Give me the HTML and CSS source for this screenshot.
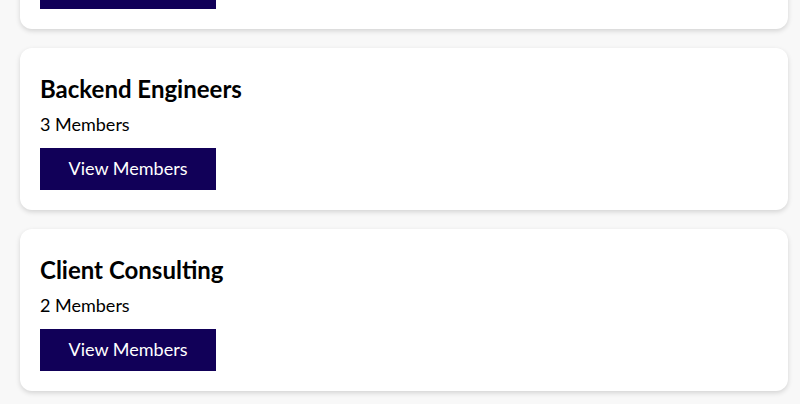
FILE: index.html
```html
<!DOCTYPE html>
<html lang="en">
<head>
<meta charset="utf-8">
<title>Teams</title>
<link rel="stylesheet" href="styles.css">
</head>
<body>
<main class="team-list">
  <section class="team-card">
    <h2 class="team-name">Frontend Developers</h2>
    <p class="team-count">4 Members</p>
    <button class="view-btn">View Members</button>
  </section>
  <section class="team-card">
    <h2 class="team-name">Backend Engineers</h2>
    <p class="team-count">3 Members</p>
    <button class="view-btn">View Members</button>
  </section>
  <section class="team-card">
    <h2 class="team-name">Client Consulting</h2>
    <p class="team-count">2 Members</p>
    <button class="view-btn">View Members</button>
  </section>
</main>
<script src="script.js"></script>
</body>
</html>
```
FILE: styles.css
```css
html, body {
  margin: 0;
  padding: 0;
  background: #f8f8f8;
  font-family: Lato, "Noto Sans", sans-serif;
  color: #000;
}
.team-list {
  display: flex;
  flex-direction: column;
  gap: 19px;
  padding: 20px 12px 20px 20px;
}
.team-card {
  background: #fff;
  border-radius: 12px;
  box-shadow: 0 2px 5px rgba(0, 0, 0, 0.15);
  padding: 25px 20px 20px;
  height: 162px;
  box-sizing: border-box;
}
.team-name {
  margin: 0 0 7px;
  font-size: 24px;
  line-height: 32px;
  font-weight: 700;
}
.team-count {
  margin: 0 0 12px;
  font-size: 18px;
  line-height: 24px;
}
.view-btn {
  display: block;
  width: 176px;
  height: 42px;
  padding: 0 0 2px;
  border: none;
  background: #110058;
  color: #fff;
  font-family: inherit;
  font-size: 18px;
  line-height: 40px;
  cursor: pointer;
}
```
FILE: script.js
```js
window.scrollTo(0, 153);
```
